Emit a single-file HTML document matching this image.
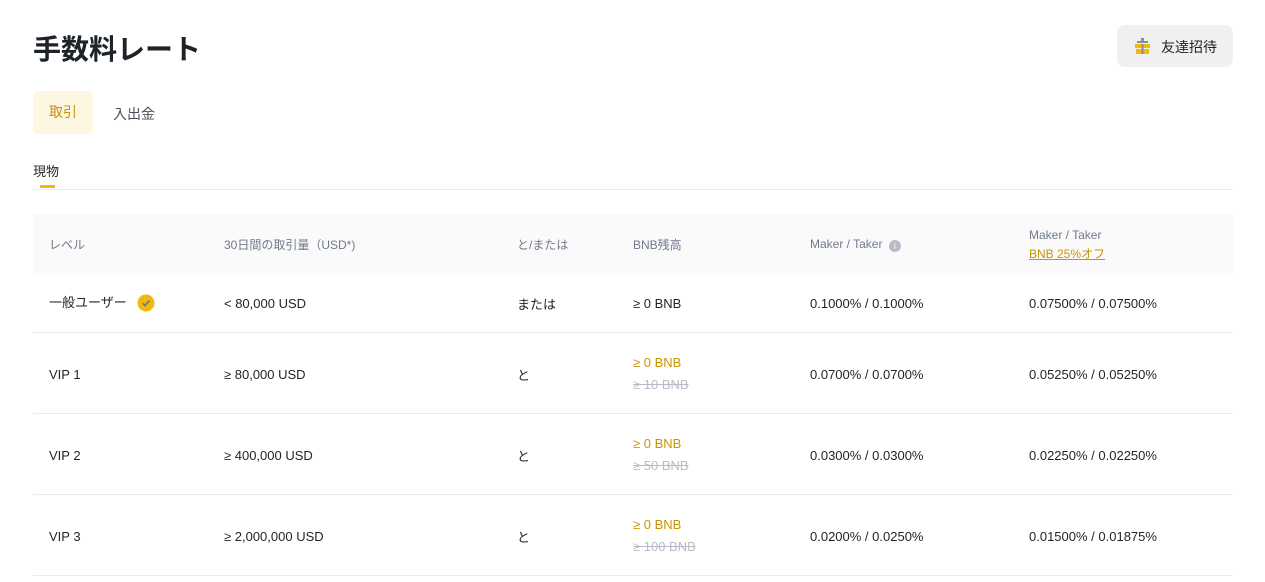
<!DOCTYPE html>
<html><head><meta charset="utf-8"><style>
*{margin:0;padding:0;box-sizing:border-box}
body{width:1265px;height:582px;background:#fff;font-family:"Liberation Sans","Noto Sans CJK JP",sans-serif;color:#1e2329;position:relative;overflow:hidden}
.a{position:absolute;white-space:nowrap;line-height:16px}
h1{position:absolute;left:33px;top:30px;font-size:28px;line-height:36px;font-weight:700;font-family:"Noto Sans CJK JP",sans-serif}
.btn{position:absolute;left:1117px;top:25px;width:116px;height:42px;background:#f0f0f0;border-radius:8px;font-size:14px}
.tab{position:absolute;left:33px;top:91px;width:60px;height:43px;background:#fdf6e3;border-radius:6px;color:#c99400;font-size:14px;text-align:center;line-height:43px}
.hdr{position:absolute;left:33px;top:214px;width:1200px;height:59px;background:#fafafa}
.line{position:absolute;left:33px;width:1200px;height:1px;background:#eaecef}
.h{font-size:12px;color:#707a8a}
.c{font-size:13px;color:#1e2329}
.y{color:#c99400;font-size:13px}
.s{color:#b7bdc6;font-size:13px;text-decoration:line-through}
</style></head><body>
<h1>手数料レート</h1>
<div class="btn"><svg class="a" style="left:17px;top:13px" width="17" height="16" viewBox="0 0 17 16"><rect x="7" y="0" width="3" height="4" fill="#848e9c"/><rect x="3" y="3" width="11" height="2" fill="#848e9c"/><rect x="1" y="6" width="15" height="4" fill="#f0b90b"/><rect x="2" y="11" width="13" height="5" fill="#f0b90b"/><rect x="7.5" y="6" width="2" height="10" fill="#848e9c"/></svg><span class="a" style="left:44px;top:14px">友達招待</span></div>
<div class="tab">取引</div>
<div class="a" style="left:113px;top:106px;font-size:14px;color:#474d57">入出金</div>
<div class="a" style="left:33px;top:164px;font-size:13px">現物</div>
<div class="a" style="left:40px;top:185px;width:15px;height:3px;background:#f0b90b"></div>
<div class="line" style="top:189px"></div>
<div class="hdr"></div>
<div class="a h" style="left:49px;top:237px">レベル</div>
<div class="a h" style="left:224px;top:237px">30日間の取引量（USD*)</div>
<div class="a h" style="left:517px;top:237px">と/または</div>
<div class="a h" style="left:633px;top:237px">BNB残高</div>
<div class="a h" style="left:810px;top:236px">Maker / Taker <span style="display:inline-block;width:12px;height:12px;border-radius:50%;background:#b7bdc6;color:#fff;font-size:9px;text-align:center;line-height:12px;vertical-align:-1px;margin-left:3px">i</span></div>
<div class="a h" style="left:1029px;top:227px">Maker / Taker</div>
<div class="a" style="left:1029px;top:246px;font-size:12px;color:#c99400;text-decoration:underline">BNB 25%オフ</div>

<div class="a c" style="left:49px;top:295px">一般ユーザー</div>
<svg class="a" style="left:137px;top:294px" width="18" height="18" viewBox="0 0 18 18"><circle cx="9" cy="9" r="8.5" fill="#f0b90b"/><path d="M5.5 9.2 L8 11.5 L12.5 6.5" stroke="#707a8a" stroke-width="1.8" fill="none"/></svg>
<div class="a c" style="left:224px;top:296px">&lt; 80,000 USD</div>
<div class="a c" style="left:517px;top:297px">または</div>
<div class="a c" style="left:633px;top:296px">≥ 0 BNB</div>
<div class="a c" style="left:810px;top:296px">0.1000% / 0.1000%</div>
<div class="a c" style="left:1029px;top:296px">0.07500% / 0.07500%</div>
<div class="line" style="top:332px"></div>

<div class="a c" style="left:49px;top:367px">VIP 1</div>
<div class="a c" style="left:224px;top:367px">≥ 80,000 USD</div>
<div class="a c" style="left:517px;top:368px">と</div>
<div class="a y" style="left:633px;top:355px">≥ 0 BNB</div>
<div class="a s" style="left:633px;top:377px">≥ 10 BNB</div>
<div class="a c" style="left:810px;top:367px">0.0700% / 0.0700%</div>
<div class="a c" style="left:1029px;top:367px">0.05250% / 0.05250%</div>
<div class="line" style="top:413px"></div>

<div class="a c" style="left:49px;top:448px">VIP 2</div>
<div class="a c" style="left:224px;top:448px">≥ 400,000 USD</div>
<div class="a c" style="left:517px;top:449px">と</div>
<div class="a y" style="left:633px;top:436px">≥ 0 BNB</div>
<div class="a s" style="left:633px;top:458px">≥ 50 BNB</div>
<div class="a c" style="left:810px;top:448px">0.0300% / 0.0300%</div>
<div class="a c" style="left:1029px;top:448px">0.02250% / 0.02250%</div>
<div class="line" style="top:494px"></div>

<div class="a c" style="left:49px;top:529px">VIP 3</div>
<div class="a c" style="left:224px;top:529px">≥ 2,000,000 USD</div>
<div class="a c" style="left:517px;top:530px">と</div>
<div class="a y" style="left:633px;top:517px">≥ 0 BNB</div>
<div class="a s" style="left:633px;top:539px">≥ 100 BNB</div>
<div class="a c" style="left:810px;top:529px">0.0200% / 0.0250%</div>
<div class="a c" style="left:1029px;top:529px">0.01500% / 0.01875%</div>
<div class="line" style="top:575px"></div>
</body></html>
